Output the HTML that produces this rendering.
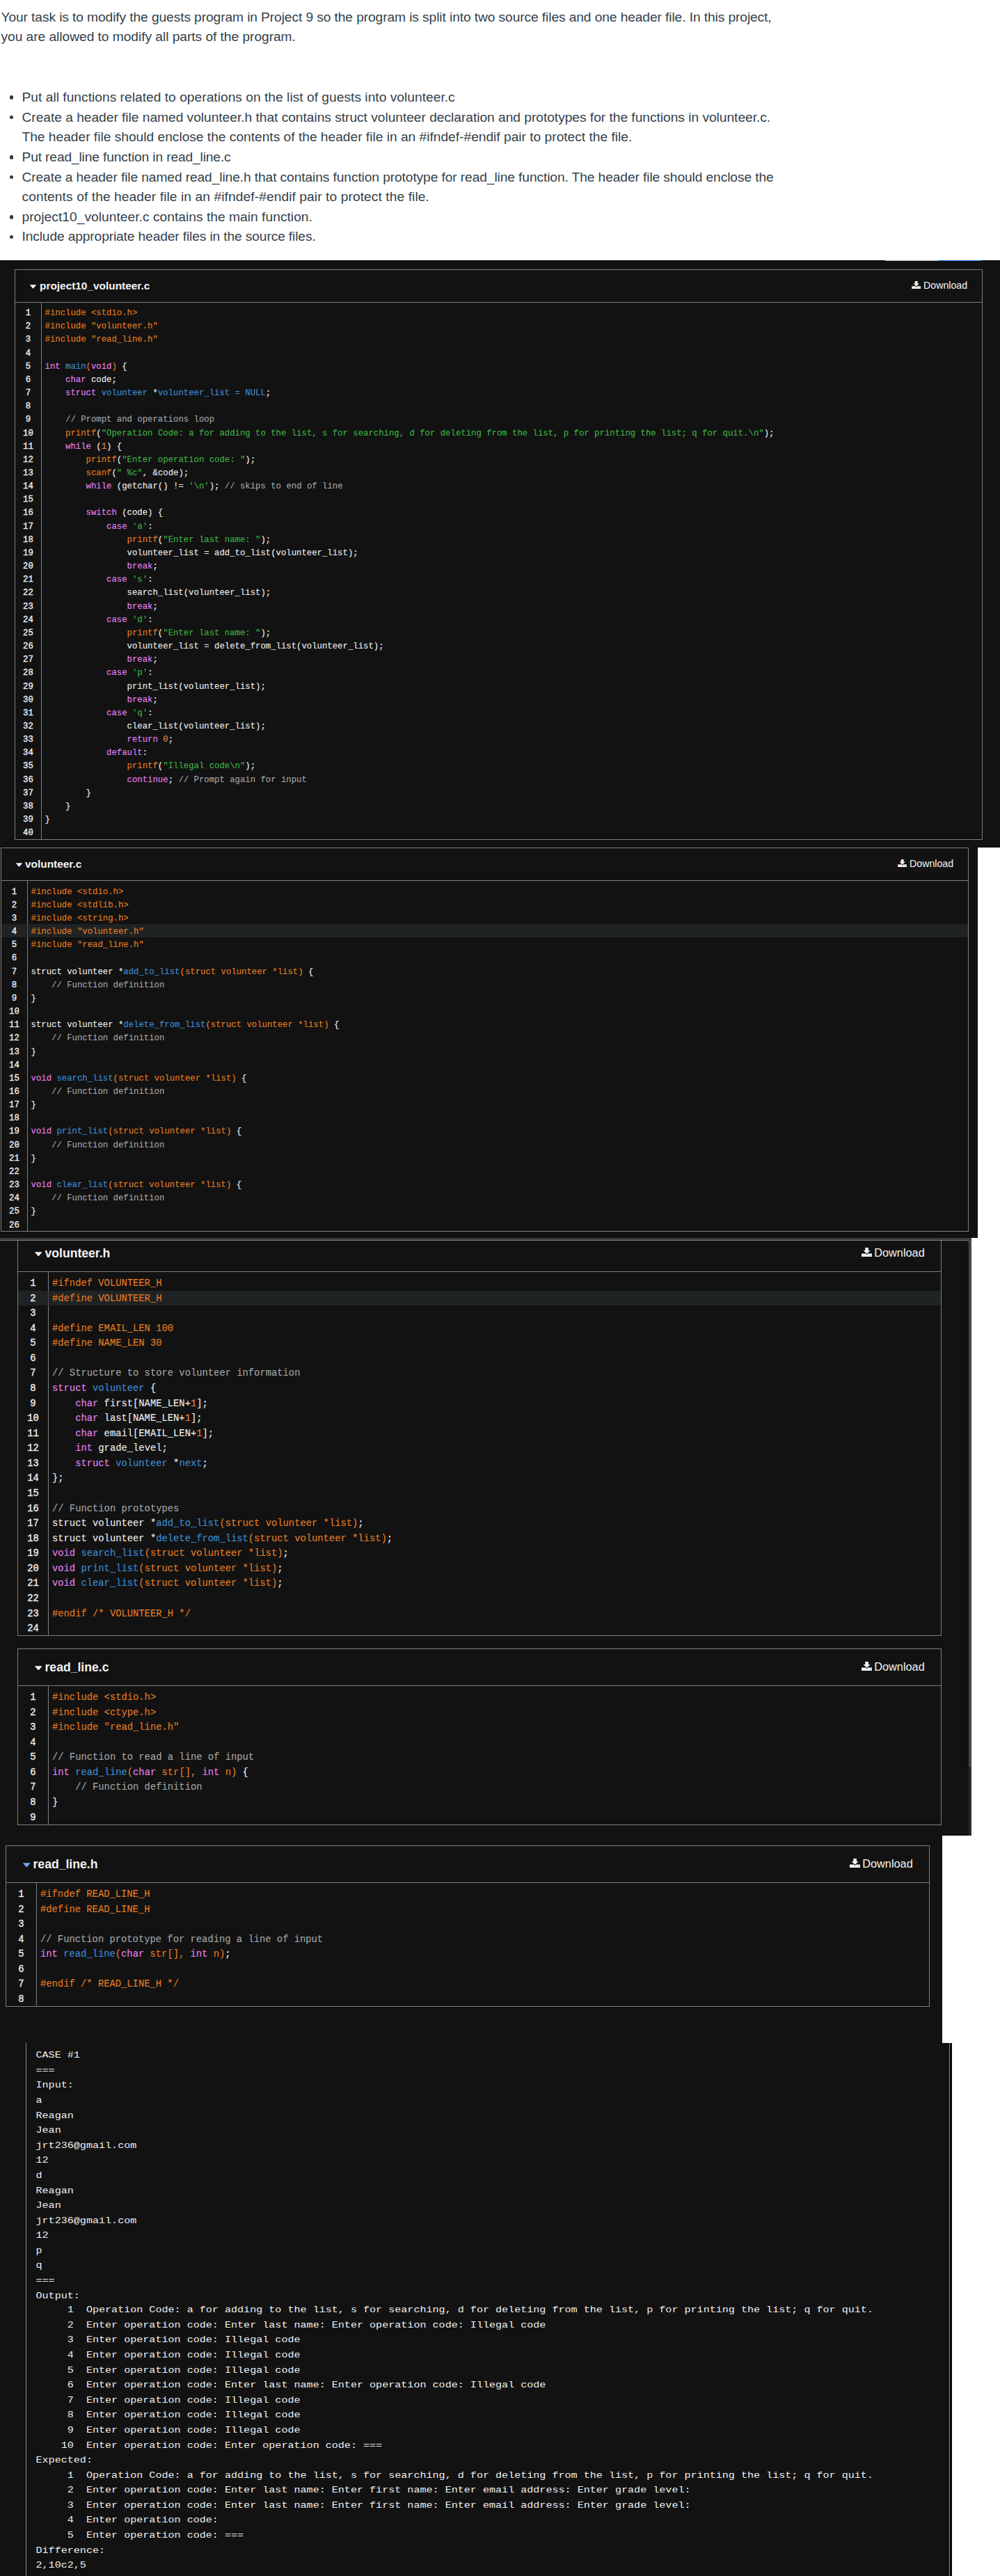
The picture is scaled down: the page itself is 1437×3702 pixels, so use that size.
<!DOCTYPE html>
<html lang="en"><head><meta charset="utf-8"><title>Project 10</title>
<style>
html,body{margin:0;padding:0}
html{width:1437px;height:3702px;overflow:hidden}
body{width:1437px;height:3702px;overflow:hidden;background:#fff;font-family:"Liberation Sans",sans-serif}
#pg{position:relative;width:1437px;height:3702px;overflow:hidden;contain:paint}
.ab,.im,.pn,.hl,.vl,.ti,.dl,.nm,.cd,.hi,.tx,.bu,.ot{position:absolute}
.im{background:#121212}
.pn{border:1px solid #7e7e7e}
.hl{height:1px;background:#7e7e7e}
.vl{width:1px;background:#7e7e7e}
.ti{color:#f4f4f4;font-weight:bold;white-space:nowrap}
.dl{color:#f4f4f4;white-space:nowrap}
.nm{color:#f0f0f0;font-family:"Liberation Mono",monospace;text-align:center;-webkit-text-stroke:.35px #f0f0f0}
.cd{color:#f0f0f0;font-family:"Liberation Mono",monospace;white-space:pre;-webkit-text-stroke:.1px}
.hi{background:#1f2324}
.k{color:#ea82f2}.f{color:#3d8fd9}.o{color:#e67e22}.s{color:#3fb544}.c{color:#a8a8a8}.n{color:#f08a3c}
.tx{color:#33414b;white-space:nowrap;font-size:19.2px;line-height:24px}
.bu{width:5.600px;height:5.600px;border-radius:50%;background:#2d3b45}
.ot{color:#f0f0f0;font-family:"Liberation Mono",monospace;white-space:pre;font-size:15.09px;line-height:25.9759px;transform:scaleY(0.83);transform-origin:0 0}
</style></head><body><div id="pg">
<div class="tx" id="t0" style="left:1.5px;top:13.4472px;letter-spacing:-0.0949px">Your task is to modify the guests program in Project 9 so the program is split into two source files and one header file. In this project,</div>
<div class="tx" id="t1" style="left:1.5px;top:40.8472px;letter-spacing:-0.0429px">you are allowed to modify all parts of the program.</div>
<div class="tx" id="t2" style="left:31.5px;top:128.047px;letter-spacing:0.0184px">Put all functions related to operations on the list of guests into volunteer.c</div>
<div class="tx" id="t3" style="left:31.5px;top:156.647px;letter-spacing:-0.0289px">Create a header file named volunteer.h that contains struct volunteer declaration and prototypes for the functions in volunteer.c.</div>
<div class="tx" id="t4" style="left:31.5px;top:185.247px;letter-spacing:-0.01px">The header file should enclose the contents of the header file in an #ifndef-#endif pair to protect the file.</div>
<div class="tx" id="t5" style="left:31.5px;top:213.947px;letter-spacing:-0.1355px">Put read_line function in read_line.c</div>
<div class="tx" id="t6" style="left:31.5px;top:242.547px;letter-spacing:-0.0992px">Create a header file named read_line.h that contains function prototype for read_line function. The header file should enclose the</div>
<div class="tx" id="t7" style="left:31.5px;top:271.147px;letter-spacing:0.0849px">contents of the header file in an #ifndef-#endif pair to protect the file.</div>
<div class="tx" id="t8" style="left:31.5px;top:299.847px;letter-spacing:0.0292px">project10_volunteer.c contains the main function.</div>
<div class="tx" id="t9" style="left:31.5px;top:328.447px;letter-spacing:-0.1266px">Include appropriate header files in the source files.</div>
<div class="bu" style="left:13.800px;top:137.3px"></div>
<div class="bu" style="left:13.800px;top:165.9px"></div>
<div class="bu" style="left:13.800px;top:223.2px"></div>
<div class="bu" style="left:13.800px;top:251.8px"></div>
<div class="bu" style="left:13.800px;top:309.1px"></div>
<div class="bu" style="left:13.800px;top:337.7px"></div>
<div class="im" style="left:0;top:374px;width:1437px;height:844px"></div>
<div class="ab" style="left:1272px;top:374px;width:76px;height:1px;background:#b9b9b9"></div>
<div class="ab" style="left:1348px;top:374px;width:63px;height:1px;background:#0b7be3"></div>
<div class="im" style="left:0;top:1218px;width:1405px;height:561px"></div>
<div class="im" style="left:0;top:1779px;width:1396px;height:859px"></div>
<div class="ab" style="left:0;top:1779px;width:1396px;height:3px;background:#3a3a3a"></div>
<div class="ab" style="left:0;top:1782px;width:1392px;height:1px;background:#7a7a7a"></div>
<div class="ab" style="left:1392px;top:1782px;width:4px;height:757px;background:#454545"></div>
<div class="ab" style="left:1392px;top:2539px;width:4px;height:99px;background:#2a2a2a"></div>
<div class="im" style="left:0;top:2638px;width:1354px;height:298px"></div>
<div class="im" style="left:0;top:2936px;width:1368px;height:766px"></div>
<div class="ab" style="left:1364px;top:2936px;width:1px;height:766px;background:#8a8a8a"></div>
<div class="ab" style="left:1365px;top:2936px;width:3px;height:766px;background:#080808"></div>
<div class="ab" style="left:37px;top:2936px;width:1px;height:766px;background:#8a8a8a"></div>
<div class="pn" style="left:21px;top:387px;width:1389px;height:818px"></div>
<div class="hl" style="left:22px;top:434px;width:1390px"></div>
<div class="vl" style="left:59px;top:435px;height:772px"></div>
<svg class="ab" style="left:43px;top:409px" width="9" height="6" viewBox="0 0 10 6"><path d="M0.3 0h9.4a.3.3 0 0 1 .2.5L5.4 5.7a.55.55 0 0 1-.8 0L.1.5A.3.3 0 0 1 .3 0z" fill="#f2f2f2"/></svg>
<div class="ti" style="left:57px;top:400.664px;font-size:15.4px;line-height:20px;letter-spacing:0px">project10_volunteer.c</div>
<div class="dl" style="left:1327px;top:400.08px;font-size:14.2px;line-height:20px;letter-spacing:0px">Download</div>
<svg class="ab" style="left:1309.8px;top:403.8px" width="13.4" height="11.2" viewBox="0 0 15 13"><path d="M5.2 0H9.8V4H12.4L7.5 8.9 2.6 4H5.2z M0 8.300H5.700L7.5 10.100 9.300 8.300H15V13H0z" fill="#f2f2f2"/><rect x="11.200" y="10.400" width=".9" height=".9" fill="#9a8a80"/><rect x="13" y="10.400" width=".9" height=".9" fill="#9a8a80"/></svg>
<div class="nm" style="left:22px;top:441.135px;width:37px;font-size:12.318px;line-height:19.16px"><div>1</div><div>2</div><div>3</div><div>4</div><div>5</div><div>6</div><div>7</div><div>8</div><div>9</div><div>10</div><div>11</div><div>12</div><div>13</div><div>14</div><div>15</div><div>16</div><div>17</div><div>18</div><div>19</div><div>20</div><div>21</div><div>22</div><div>23</div><div>24</div><div>25</div><div>26</div><div>27</div><div>28</div><div>29</div><div>30</div><div>31</div><div>32</div><div>33</div><div>34</div><div>35</div><div>36</div><div>37</div><div>38</div><div>39</div><div>40</div></div>
<div class="cd" style="left:64.5px;top:441.135px;font-size:12.318px;line-height:19.16px"><div><span class="o">#include &lt;stdio.h&gt;</span></div><div><span class="o">#include "volunteer.h"</span></div><div><span class="o">#include "read_line.h"</span></div><div> </div><div><span class="k">int</span> <span class="f">main</span><span class="o">(</span><span class="k">void</span><span class="o">)</span> {</div><div>    <span class="k">char</span> code;</div><div>    <span class="k">struct</span> <span class="f">volunteer</span> *<span class="f">volunteer_list = NULL</span>;</div><div> </div><div>    <span class="c">// Prompt and operations loop</span></div><div>    <span class="o">printf</span>(<span class="s">"Operation Code: a for adding to the list, s for searching, d for deleting from the list, p for printing the list; q for quit.\n"</span>);</div><div>    <span class="k">while</span> (<span class="n">1</span>) {</div><div>        <span class="o">printf</span>(<span class="s">"Enter operation code: "</span>);</div><div>        <span class="o">scanf</span>(<span class="s">" %c"</span>, &amp;code);</div><div>        <span class="k">while</span> (getchar() != <span class="s">'\n'</span>); <span class="c">// skips to end of line</span></div><div> </div><div>        <span class="k">switch</span> (code) {</div><div>            <span class="k">case</span> <span class="s">'a'</span>:</div><div>                <span class="o">printf</span>(<span class="s">"Enter last name: "</span>);</div><div>                volunteer_list = add_to_list(volunteer_list);</div><div>                <span class="k">break</span>;</div><div>            <span class="k">case</span> <span class="s">'s'</span>:</div><div>                search_list(volunteer_list);</div><div>                <span class="k">break</span>;</div><div>            <span class="k">case</span> <span class="s">'d'</span>:</div><div>                <span class="o">printf</span>(<span class="s">"Enter last name: "</span>);</div><div>                volunteer_list = delete_from_list(volunteer_list);</div><div>                <span class="k">break</span>;</div><div>            <span class="k">case</span> <span class="s">'p'</span>:</div><div>                print_list(volunteer_list);</div><div>                <span class="k">break</span>;</div><div>            <span class="k">case</span> <span class="s">'q'</span>:</div><div>                clear_list(volunteer_list);</div><div>                <span class="k">return</span> <span class="n">0</span>;</div><div>            <span class="k">default</span>:</div><div>                <span class="o">printf</span>(<span class="s">"Illegal code\n"</span>);</div><div>                <span class="k">continue</span>; <span class="c">// Prompt again for input</span></div><div>        }</div><div>    }</div><div>}</div><div> </div></div>
<div class="pn" style="left:1px;top:1218px;width:1389px;height:550px"></div>
<div class="hl" style="left:2px;top:1265px;width:1390px"></div>
<div class="vl" style="left:39px;top:1266px;height:504px"></div>
<svg class="ab" style="left:22.8px;top:1240px" width="9" height="6" viewBox="0 0 10 6"><path d="M0.3 0h9.4a.3.3 0 0 1 .2.5L5.4 5.7a.55.55 0 0 1-.8 0L.1.5A.3.3 0 0 1 .3 0z" fill="#f2f2f2"/></svg>
<div class="ti" style="left:36px;top:1231.66px;font-size:15.4px;line-height:20px;letter-spacing:0px">volunteer.c</div>
<div class="dl" style="left:1307px;top:1231.08px;font-size:14.2px;line-height:20px;letter-spacing:0px">Download</div>
<svg class="ab" style="left:1289.8px;top:1234.6px" width="13.4" height="11.2" viewBox="0 0 15 13"><path d="M5.2 0H9.8V4H12.4L7.5 8.9 2.6 4H5.2z M0 8.300H5.700L7.5 10.100 9.300 8.300H15V13H0z" fill="#f2f2f2"/><rect x="11.200" y="10.400" width=".9" height=".9" fill="#9a8a80"/><rect x="13" y="10.400" width=".9" height=".9" fill="#9a8a80"/></svg>
<div class="hi" style="left:2px;top:1328px;width:1389px;height:19px"></div>
<div class="vl" style="left:39px;top:1328px;height:19px;background:#4c5052"></div>
<div class="nm" style="left:2px;top:1272.64px;width:37px;font-size:12.318px;line-height:19.16px"><div>1</div><div>2</div><div>3</div><div>4</div><div>5</div><div>6</div><div>7</div><div>8</div><div>9</div><div>10</div><div>11</div><div>12</div><div>13</div><div>14</div><div>15</div><div>16</div><div>17</div><div>18</div><div>19</div><div>20</div><div>21</div><div>22</div><div>23</div><div>24</div><div>25</div><div>26</div></div>
<div class="cd" style="left:44.5px;top:1272.64px;font-size:12.318px;line-height:19.16px"><div><span class="o">#include &lt;stdio.h&gt;</span></div><div><span class="o">#include &lt;stdlib.h&gt;</span></div><div><span class="o">#include &lt;string.h&gt;</span></div><div><span class="o">#include "volunteer.h"</span></div><div><span class="o">#include "read_line.h"</span></div><div> </div><div>struct volunteer *<span class="f">add_to_list</span><span class="o">(struct volunteer *list)</span> {</div><div>    <span class="c">// Function definition</span></div><div>}</div><div> </div><div>struct volunteer *<span class="f">delete_from_list</span><span class="o">(struct volunteer *list)</span> {</div><div>    <span class="c">// Function definition</span></div><div>}</div><div> </div><div><span class="k">void</span> <span class="f">search_list</span><span class="o">(struct volunteer *list)</span> {</div><div>    <span class="c">// Function definition</span></div><div>}</div><div> </div><div><span class="k">void</span> <span class="f">print_list</span><span class="o">(struct volunteer *list)</span> {</div><div>    <span class="c">// Function definition</span></div><div>}</div><div> </div><div><span class="k">void</span> <span class="f">clear_list</span><span class="o">(struct volunteer *list)</span> {</div><div>    <span class="c">// Function definition</span></div><div>}</div><div> </div></div>
<div class="pn" style="left:25px;top:1782px;width:1326px;height:567px"></div>
<div class="hl" style="left:26px;top:1827px;width:1327px"></div>
<div class="vl" style="left:69px;top:1828px;height:523px"></div>
<svg class="ab" style="left:49.8px;top:1798.7px" width="10.5" height="6.6" viewBox="0 0 10 6"><path d="M0.3 0h9.4a.3.3 0 0 1 .2.5L5.4 5.7a.55.55 0 0 1-.8 0L.1.5A.3.3 0 0 1 .3 0z" fill="#f2f2f2"/></svg>
<div class="ti" style="left:64.5px;top:1790.6px;font-size:17.6px;line-height:20px;letter-spacing:0px">volunteer.h</div>
<div class="dl" style="left:1256.3px;top:1790.35px;font-size:16.3px;line-height:20px;letter-spacing:0px">Download</div>
<svg class="ab" style="left:1238px;top:1792.7px" width="15.2" height="13.2" viewBox="0 0 15 13"><path d="M5.2 0H9.8V4H12.4L7.5 8.9 2.6 4H5.2z M0 8.300H5.700L7.5 10.100 9.300 8.300H15V13H0z" fill="#f2f2f2"/><rect x="11.200" y="10.400" width=".9" height=".9" fill="#9a8a80"/><rect x="13" y="10.400" width=".9" height=".9" fill="#9a8a80"/></svg>
<div class="hi" style="left:26px;top:1855px;width:1326px;height:21px"></div>
<div class="vl" style="left:69px;top:1855px;height:21px;background:#4c5052"></div>
<div class="nm" style="left:26px;top:1833.93px;width:43px;font-size:13.82px;line-height:21.574px"><div>1</div><div>2</div><div>3</div><div>4</div><div>5</div><div>6</div><div>7</div><div>8</div><div>9</div><div>10</div><div>11</div><div>12</div><div>13</div><div>14</div><div>15</div><div>16</div><div>17</div><div>18</div><div>19</div><div>20</div><div>21</div><div>22</div><div>23</div><div>24</div></div>
<div class="cd" style="left:75px;top:1833.93px;font-size:13.82px;line-height:21.574px"><div><span class="o">#ifndef VOLUNTEER_H</span></div><div><span class="o">#define VOLUNTEER_H</span></div><div> </div><div><span class="o">#define EMAIL_LEN 100</span></div><div><span class="o">#define NAME_LEN 30</span></div><div> </div><div><span class="c">// Structure to store volunteer information</span></div><div><span class="k">struct</span> <span class="f">volunteer</span> {</div><div>    <span class="k">char</span> first[NAME_LEN+<span class="n">1</span>];</div><div>    <span class="k">char</span> last[NAME_LEN+<span class="n">1</span>];</div><div>    <span class="k">char</span> email[EMAIL_LEN+<span class="n">1</span>];</div><div>    <span class="k">int</span> grade_level;</div><div>    <span class="k">struct</span> <span class="f">volunteer</span> *<span class="f">next</span>;</div><div>};</div><div> </div><div><span class="c">// Function prototypes</span></div><div>struct volunteer *<span class="f">add_to_list</span><span class="o">(struct volunteer *list)</span>;</div><div>struct volunteer *<span class="f">delete_from_list</span><span class="o">(struct volunteer *list)</span>;</div><div><span class="k">void</span> <span class="f">search_list</span><span class="o">(struct volunteer *list)</span>;</div><div><span class="k">void</span> <span class="f">print_list</span><span class="o">(struct volunteer *list)</span>;</div><div><span class="k">void</span> <span class="f">clear_list</span><span class="o">(struct volunteer *list)</span>;</div><div> </div><div><span class="o">#endif /* VOLUNTEER_H */</span></div><div> </div></div>
<div class="pn" style="left:25px;top:2369px;width:1326px;height:252px"></div>
<div class="hl" style="left:26px;top:2422px;width:1327px"></div>
<div class="vl" style="left:69px;top:2423px;height:200px"></div>
<svg class="ab" style="left:49.8px;top:2393.7px" width="10.5" height="6.6" viewBox="0 0 10 6"><path d="M0.3 0h9.4a.3.3 0 0 1 .2.5L5.4 5.7a.55.55 0 0 1-.8 0L.1.5A.3.3 0 0 1 .3 0z" fill="#f2f2f2"/></svg>
<div class="ti" style="left:64.5px;top:2385.6px;font-size:17.6px;line-height:20px;letter-spacing:0px">read_line.c</div>
<div class="dl" style="left:1256.3px;top:2385.35px;font-size:16.3px;line-height:20px;letter-spacing:0px">Download</div>
<svg class="ab" style="left:1238px;top:2387.7px" width="15.2" height="13.2" viewBox="0 0 15 13"><path d="M5.2 0H9.8V4H12.4L7.5 8.9 2.6 4H5.2z M0 8.300H5.700L7.5 10.100 9.300 8.300H15V13H0z" fill="#f2f2f2"/><rect x="11.200" y="10.400" width=".9" height=".9" fill="#9a8a80"/><rect x="13" y="10.400" width=".9" height=".9" fill="#9a8a80"/></svg>
<div class="nm" style="left:26px;top:2428.93px;width:43px;font-size:13.82px;line-height:21.574px"><div>1</div><div>2</div><div>3</div><div>4</div><div>5</div><div>6</div><div>7</div><div>8</div><div>9</div></div>
<div class="cd" style="left:75px;top:2428.93px;font-size:13.82px;line-height:21.574px"><div><span class="o">#include &lt;stdio.h&gt;</span></div><div><span class="o">#include &lt;ctype.h&gt;</span></div><div><span class="o">#include "read_line.h"</span></div><div> </div><div><span class="c">// Function to read a line of input</span></div><div><span class="k">int</span> <span class="f">read_line</span><span class="o">(</span><span class="k">char</span><span class="o"> str[], </span><span class="k">int</span><span class="o"> n)</span> {</div><div>    <span class="c">// Function definition</span></div><div>}</div><div> </div></div>
<div class="pn" style="left:8px;top:2652px;width:1326px;height:230px"></div>
<div class="hl" style="left:9px;top:2705px;width:1327px"></div>
<div class="vl" style="left:52px;top:2706px;height:178px"></div>
<svg class="ab" style="left:32.8px;top:2676.7px" width="10.5" height="6.6" viewBox="0 0 10 6"><path d="M0.3 0h9.4a.3.3 0 0 1 .2.5L5.4 5.7a.55.55 0 0 1-.8 0L.1.5A.3.3 0 0 1 .3 0z" fill="#6ea8fe"/></svg>
<div class="ti" style="left:47.5px;top:2668.6px;font-size:17.6px;line-height:20px;letter-spacing:0px">read_line.h</div>
<div class="dl" style="left:1239.3px;top:2668.35px;font-size:16.3px;line-height:20px;letter-spacing:0px">Download</div>
<svg class="ab" style="left:1221px;top:2670.7px" width="15.2" height="13.2" viewBox="0 0 15 13"><path d="M5.2 0H9.8V4H12.4L7.5 8.9 2.6 4H5.2z M0 8.300H5.700L7.5 10.100 9.300 8.300H15V13H0z" fill="#f2f2f2"/><rect x="11.200" y="10.400" width=".9" height=".9" fill="#9a8a80"/><rect x="13" y="10.400" width=".9" height=".9" fill="#9a8a80"/></svg>
<div class="nm" style="left:9px;top:2711.93px;width:43px;font-size:13.82px;line-height:21.574px"><div>1</div><div>2</div><div>3</div><div>4</div><div>5</div><div>6</div><div>7</div><div>8</div></div>
<div class="cd" style="left:58px;top:2711.93px;font-size:13.82px;line-height:21.574px"><div><span class="o">#ifndef READ_LINE_H</span></div><div><span class="o">#define READ_LINE_H</span></div><div> </div><div><span class="c">// Function prototype for reading a line of input</span></div><div><span class="k">int</span> <span class="f">read_line</span><span class="o">(</span><span class="k">char</span><span class="o"> str[], </span><span class="k">int</span><span class="o"> n)</span>;</div><div> </div><div><span class="o">#endif /* READ_LINE_H */</span></div><div> </div></div>
<div class="ot" style="left:51.500px;top:2944.18px">CASE #1
===
Input:
a
Reagan
Jean
jrt236@gmail.com
12
d
Reagan
Jean
jrt236@gmail.com
12
p
q
===
Output:
     1  Operation Code: a for adding to the list, s for searching, d for deleting from the list, p for printing the list; q for quit.
     2  Enter operation code: Enter last name: Enter operation code: Illegal code
     3  Enter operation code: Illegal code
     4  Enter operation code: Illegal code
     5  Enter operation code: Illegal code
     6  Enter operation code: Enter last name: Enter operation code: Illegal code
     7  Enter operation code: Illegal code
     8  Enter operation code: Illegal code
     9  Enter operation code: Illegal code
    10  Enter operation code: Enter operation code: ===
Expected:
     1  Operation Code: a for adding to the list, s for searching, d for deleting from the list, p for printing the list; q for quit.
     2  Enter operation code: Enter last name: Enter first name: Enter email address: Enter grade level: 
     3  Enter operation code: Enter last name: Enter first name: Enter email address: Enter grade level: 
     4  Enter operation code: 
     5  Enter operation code: ===
Difference:
2,10c2,5
&lt;      2  Enter operation code: Enter last name: Enter operation code: Illegal code</div>
</div></body></html>
